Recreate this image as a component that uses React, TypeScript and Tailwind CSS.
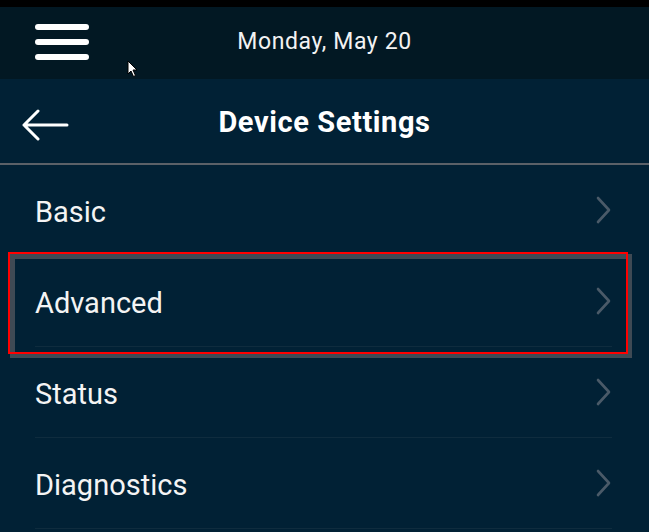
const items = ['Basic', 'Advanced', 'Status', 'Diagnostics']

function Chevron() {
  return (
    <svg width="16" height="28" viewBox="0 0 16 28" fill="none">
      <path d="M2 2 L13 14 L2 26" stroke="#4a5a68" strokeWidth="2.6" strokeLinecap="round" strokeLinejoin="round" />
    </svg>
  )
}

export default function App() {
  return (
    <div
      className="relative h-[532px] w-[649px] overflow-hidden bg-[#012135] text-white"
      style={{ fontFamily: 'Roboto, "Noto Sans", sans-serif' }}
    >
      <div className="h-[7px] bg-black" />

      {/* Top bar */}
      <div className="grid h-[72px] grid-cols-[1fr_auto_1fr] items-center bg-[#021823]">
        <div className="flex flex-col gap-[9px] pl-[35px] pb-[2px]">
          <span className="block h-[6px] w-[54px] rounded-full bg-white" />
          <span className="block h-[6px] w-[54px] rounded-full bg-white" />
          <span className="block h-[6px] w-[54px] rounded-full bg-white" />
        </div>
        <div className="pb-[3px] text-[23px] leading-none tracking-[0.6px] text-[#f2f2f2]">Monday, May 20</div>
        <div />
      </div>

      {/* Header */}
      <div className="grid h-[86px] grid-cols-[1fr_auto_1fr] items-center border-b-2 border-[#5b6168]">
        <div className="pl-[22px] pt-[8px]">
          <svg width="48" height="32" viewBox="0 0 48 32" fill="none">
            <path d="M2 16 H45 M16 2 L2 16 L16 30" stroke="white" strokeWidth="3" strokeLinecap="round" strokeLinejoin="round" />
          </svg>
        </div>
        <div className="pt-[2px] text-[29px] font-bold leading-none tracking-[0.6px]">Device Settings</div>
        <div />
      </div>

      {/* List */}
      <div>
        {items.map((label) => (
          <div
            key={label}
            className="ml-[35px] mr-[37px] flex h-[91px] items-center justify-between border-b border-[#0f2c3e]"
          >
            <span className="pt-[4px] text-[29px] leading-none text-[#f4f4f4]">{label}</span>
            <Chevron />
          </div>
        ))}
      </div>

      {/* Focus highlight + annotation */}
      <div className="pointer-events-none absolute left-[10px] top-[254px] h-[104px] w-[622px] border-[5px] border-[#3f4a54]" />
      <div className="pointer-events-none absolute left-[8px] top-[252px] h-[102px] w-[620px] border-2 border-[#ff0000]" />

      {/* Mouse cursor */}
      <svg className="pointer-events-none absolute left-[127px] top-[60px]" width="12" height="18" viewBox="0 0 12 18">
        <path d="M1 1 L1 14 L4 11 L6.5 16.5 L8.5 15.5 L6 10 L10 10 Z" fill="white" stroke="black" strokeWidth="1" />
      </svg>
    </div>
  )
}
